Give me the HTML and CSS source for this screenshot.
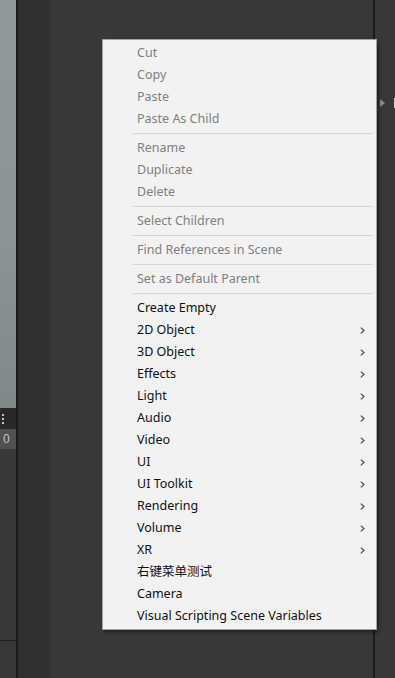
FILE: index.html
```html
<!DOCTYPE html>
<html>
<head>
<meta charset="utf-8">
<link rel="stylesheet" href="styles.css">
</head>
<body>
<div class="editor">
  <div class="scene-col">
    <div class="scene-view"></div>
    <div class="scene-toolbar"><span class="dots"><i></i><i></i><i></i></span></div>
    <div class="scene-field">0</div>
    <div class="scene-panel"></div>
    <div class="scene-panel2"></div>
  </div>
  <div class="split"></div>
  <div class="gutter"></div>
  <div class="hierarchy"></div>
  <div class="split2"></div>
  <div class="right-panel">
    <div class="foldout"><span class="tri"></span><span class="box"></span></div>
  </div>
</div>

<div class="menu">
  <div class="item disabled">Cut</div>
  <div class="item disabled">Copy</div>
  <div class="item disabled">Paste</div>
  <div class="item disabled">Paste As Child</div>
  <div class="sep"></div>
  <div class="item disabled">Rename</div>
  <div class="item disabled">Duplicate</div>
  <div class="item disabled">Delete</div>
  <div class="sep"></div>
  <div class="item disabled">Select Children</div>
  <div class="sep"></div>
  <div class="item disabled">Find References in Scene</div>
  <div class="sep"></div>
  <div class="item disabled">Set as Default Parent</div>
  <div class="sep"></div>
  <div class="item">Create Empty</div>
  <div class="item sub">2D Object<svg class="chev" viewBox="0 0 5 7"><polyline points="0.8,0.6 4,3.5 0.8,6.4"/></svg></div>
  <div class="item sub">3D Object<svg class="chev" viewBox="0 0 5 7"><polyline points="0.8,0.6 4,3.5 0.8,6.4"/></svg></div>
  <div class="item sub">Effects<svg class="chev" viewBox="0 0 5 7"><polyline points="0.8,0.6 4,3.5 0.8,6.4"/></svg></div>
  <div class="item sub">Light<svg class="chev" viewBox="0 0 5 7"><polyline points="0.8,0.6 4,3.5 0.8,6.4"/></svg></div>
  <div class="item sub">Audio<svg class="chev" viewBox="0 0 5 7"><polyline points="0.8,0.6 4,3.5 0.8,6.4"/></svg></div>
  <div class="item sub">Video<svg class="chev" viewBox="0 0 5 7"><polyline points="0.8,0.6 4,3.5 0.8,6.4"/></svg></div>
  <div class="item sub">UI<svg class="chev" viewBox="0 0 5 7"><polyline points="0.8,0.6 4,3.5 0.8,6.4"/></svg></div>
  <div class="item sub">UI Toolkit<svg class="chev" viewBox="0 0 5 7"><polyline points="0.8,0.6 4,3.5 0.8,6.4"/></svg></div>
  <div class="item sub">Rendering<svg class="chev" viewBox="0 0 5 7"><polyline points="0.8,0.6 4,3.5 0.8,6.4"/></svg></div>
  <div class="item sub">Volume<svg class="chev" viewBox="0 0 5 7"><polyline points="0.8,0.6 4,3.5 0.8,6.4"/></svg></div>
  <div class="item sub">XR<svg class="chev" viewBox="0 0 5 7"><polyline points="0.8,0.6 4,3.5 0.8,6.4"/></svg></div>
  <div class="item">右键菜单测试</div>
  <div class="item">Camera</div>
  <div class="item">Visual Scripting Scene Variables</div>
</div>
</body>
</html>
```

FILE: styles.css
```css
html, body {
  margin: 0;
  padding: 0;
  width: 395px;
  height: 678px;
  overflow: hidden;
  background: #383838;
  font-family: "Noto Sans", "Noto Sans CJK SC", sans-serif;
}

.editor {
  display: flex;
  height: 678px;
}

.scene-col {
  width: 16px;
  flex: none;
  display: flex;
  flex-direction: column;
  background: #383838;
}
.scene-view {
  height: 408px;
  background: linear-gradient(180deg, #909a9d 0%, #8a9497 60%, #7f898c 100%);
}
.scene-toolbar {
  height: 21px;
  background: #282828;
  display: flex;
  align-items: center;
}
.dots {
  display: flex;
  flex-direction: column;
  gap: 2px;
  margin-left: 2px;
}
.dots i {
  display: block;
  width: 2px;
  height: 2px;
  background: #c4c4c4;
}
.scene-field {
  height: 20px;
  background: #515151;
  color: #c4c4c4;
  font-size: 12px;
  line-height: 20px;
  padding-left: 3px;
  font-family: "Liberation Sans", sans-serif;
}
.scene-panel {
  height: 191px;
  background: #383838;
  border-bottom: 1px solid #1e1e1e;
}
.scene-panel2 {
  flex: 1;
  background: #383838;
}

.split {
  width: 2px;
  flex: none;
  background: #191919;
}
.gutter {
  width: 32px;
  flex: none;
  background: #303030;
}
.hierarchy {
  width: 323px;
  flex: none;
  background: #383838;
}
.split2 {
  width: 2px;
  flex: none;
  background: #1c1c1c;
}
.right-panel {
  flex: 1;
  background: #383838;
}
.foldout {
  display: flex;
  align-items: center;
  margin-top: 98px;
  height: 10px;
}
.tri {
  width: 0;
  height: 0;
  border-top: 4px solid transparent;
  border-bottom: 4px solid transparent;
  border-left: 5px solid #8a8a8a;
  margin-left: 5px;
}
.box {
  width: 4px;
  height: 10px;
  background: #c8c8c8;
  margin-left: 9px;
}

.menu {
  position: absolute;
  left: 102px;
  top: 39px;
  width: 273px;
  padding: 2px 0 2px 0;
  background: #f2f2f2;
  border: 1px solid #a3a3a3;
  box-shadow: 2px 2px 3px rgba(0, 0, 0, 0.45);
}
.item {
  height: 22px;
  line-height: 22px;
  padding-left: 34px;
  font-size: 12.5px;
  color: #111111;
  display: flex;
  align-items: center;
  position: relative;
  white-space: nowrap;
}
.item.disabled {
  color: #7f7f7f;
}
.sep {
  height: 7px;
  display: flex;
  align-items: center;
  padding-left: 30px;
  padding-right: 3px;
}
.sep::before {
  content: "";
  display: block;
  height: 1px;
  flex: 1;
  background: #d6d6d6;
}
.chev {
  position: absolute;
  left: 257px;
  top: 8px;
  width: 5px;
  height: 7px;
  fill: none;
  stroke: #4a4a4a;
  stroke-width: 1.2;
}
```
